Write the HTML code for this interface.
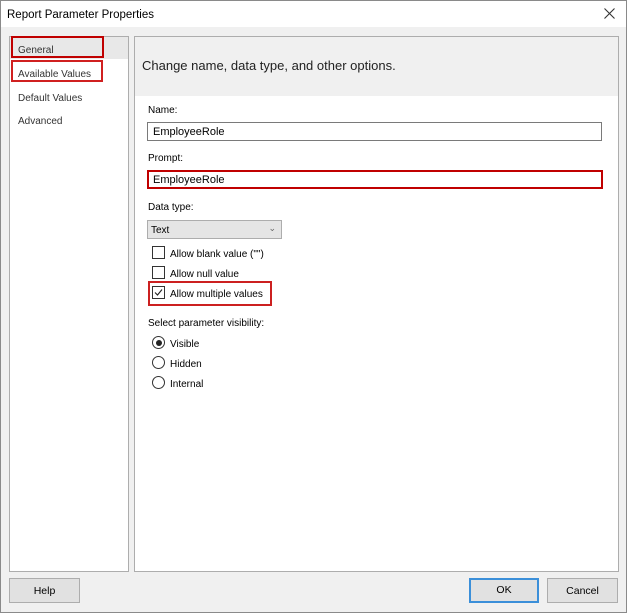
<!DOCTYPE html><html><head><style>
*{box-sizing:border-box;margin:0;padding:0}
body{width:627px;height:613px;overflow:hidden;font-family:"Liberation Sans",sans-serif;font-size:10px;color:#000;background:#f0f0f0;position:relative}
.frame{position:absolute;left:0;top:0;width:627px;height:613px;border:1px solid #8a8a8a;pointer-events:none}
.title{position:absolute;left:0;top:0;width:627px;height:27px;background:#fff}
.a{position:absolute}
.lbl{position:absolute;font-size:10px;color:#000;margin-top:2px}
.box{position:absolute;background:#fff;border:1px solid #7a7a7a;height:19px;padding:3px 5px 0;font-size:11px}
.red{position:absolute;border:2px solid #c00000}
.cb{position:absolute;width:13px;height:13px;border:1px solid #333;background:#fff}
.rb{position:absolute;width:13px;height:13px;border:1px solid #333;border-radius:50%;background:#fff}
.btn{position:absolute;height:25px;background:#e1e1e1;border:1px solid #adadad;text-align:center;line-height:25px;font-size:10.5px}
</style></head><body>
<div class="title"></div>
<div class="lbl" style="left:7px;top:7px;font-size:11.5px">Report Parameter Properties</div>
<svg class="a" style="left:604px;top:8px" width="11" height="11"><path d="M0.5 0.5L10.5 10.5M10.5 0.5L0.5 10.5" stroke="#333" stroke-width="1.1"/></svg>
<div class="a" style="left:9px;top:36px;width:120px;height:536px;background:#fff;border:1px solid #adadad"></div>
<div class="a" style="left:10px;top:37px;width:118px;height:22px;background:#e8e8e8"></div>
<div class="red" style="left:11px;top:36px;width:93px;height:22px"></div>
<div class="red" style="left:11px;top:60px;width:92px;height:22px;border-color:#d02020"></div>
<div class="lbl" style="left:18px;top:43px;color:#333">General</div>
<div class="lbl" style="left:18px;top:67px;color:#333">Available Values</div>
<div class="lbl" style="left:18px;top:91px;color:#333">Default Values</div>
<div class="lbl" style="left:18px;top:114px;color:#333">Advanced</div>
<div class="a" style="left:134px;top:36px;width:485px;height:536px;background:#fff;border:1px solid #adadad"></div>
<div class="a" style="left:135px;top:37px;width:483px;height:59px;background:#f0f0f0"></div>
<div class="lbl" style="left:142px;top:56px;font-size:13px;color:#222">Change name, data type, and other options.</div>
<div class="lbl" style="left:148px;top:103px">Name:</div>
<div class="box" style="left:147px;top:122px;width:455px">EmployeeRole</div>
<div class="lbl" style="left:148px;top:151px">Prompt:</div>
<div class="box" style="left:147px;top:170px;width:456px;border:2px solid #c00000;padding:2px 4px 0">EmployeeRole</div>
<div class="lbl" style="left:148px;top:200px">Data type:</div>
<div class="a" style="left:147px;top:220px;width:135px;height:19px;background:#e5e5e5;border:1px solid #adadad;padding:4px 3px 0;font-size:10px">Text<span style="position:absolute;right:5px;top:2px;color:#666;font-size:9px">&#8964;</span></div>
<div class="cb" style="left:152px;top:246px"></div><div class="lbl" style="left:170px;top:247px">Allow blank value ("")</div>
<div class="cb" style="left:152px;top:266px"></div><div class="lbl" style="left:170px;top:267px">Allow null value</div>
<div class="red" style="left:148px;top:281px;width:124px;height:25px;border-color:#cc2020"></div>
<div class="cb" style="left:152px;top:286px"></div>
<svg class="a" style="left:153px;top:287px" width="11" height="11"><path d="M2 5.5L4.5 8L9 2.5" stroke="#222" stroke-width="1.1" fill="none"/></svg>
<div class="lbl" style="left:170px;top:287px">Allow multiple values</div>
<div class="lbl" style="left:148px;top:316px">Select parameter visibility:</div>
<div class="rb" style="left:152px;top:336px"></div><div class="a" style="left:155.5px;top:339.5px;width:6px;height:6px;border-radius:50%;background:#222"></div>
<div class="lbl" style="left:170px;top:337px">Visible</div>
<div class="rb" style="left:152px;top:356px"></div><div class="lbl" style="left:170px;top:357px">Hidden</div>
<div class="rb" style="left:152px;top:376px"></div><div class="lbl" style="left:170px;top:377px">Internal</div>
<div class="btn" style="left:9px;top:578px;width:71px">Help</div>
<div class="btn" style="left:469px;top:578px;width:70px;border:2px solid #3b8fd9;line-height:21px">OK</div>
<div class="btn" style="left:547px;top:578px;width:71px">Cancel</div>
<div class="frame"></div>
</body></html>
